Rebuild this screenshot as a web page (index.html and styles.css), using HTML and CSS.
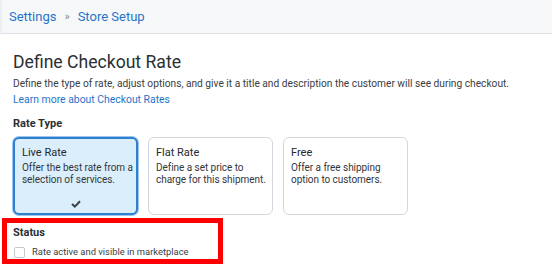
FILE: index.html
```html
<!DOCTYPE html>
<html lang="en">
<head>
  <meta charset="UTF-8" />
  <meta name="viewport" content="width=device-width, initial-scale=1.0" />
  <title>Define Checkout Rate</title>
  <link rel="stylesheet" href="styles.css">
</head>
<body>
  <div class="topbar">
    <a href="#">Settings</a>
    <span class="sep">&raquo;</span>
    <a href="#">Store Setup</a>
  </div>

  <div class="page">
    <h1>Define Checkout Rate</h1>
    <p class="intro">Define the type of rate, adjust options, and give it a title and description the customer will see during checkout.</p>
    <a class="learn" href="#">Learn more about Checkout Rates</a>

    <div class="label">Rate Type</div>
    <div class="rate-options">
      <div class="rate-card selected">
        <div class="rate-title">Live Rate</div>
        <div class="rate-desc">Offer the best rate from a selection of services.</div>
        <svg class="check" width="10" height="8" viewBox="0 0 10 8">
          <polyline points="1,4 3.8,6.6 9,1.2" fill="none" stroke="#3d4045" stroke-width="2" />
        </svg>
      </div>
      <div class="rate-card">
        <div class="rate-title">Flat Rate</div>
        <div class="rate-desc">Define a set price to charge for this shipment.</div>
      </div>
      <div class="rate-card">
        <div class="rate-title">Free</div>
        <div class="rate-desc">Offer a free shipping option to customers.</div>
      </div>
    </div>

    <div class="status">
      <div class="label">Status</div>
      <label class="check-row">
        <span class="box"></span>
        Rate active and visible in marketplace
      </label>
    </div>
  </div>
</body>
</html>
```

FILE: styles.css
```css
body {
  font-family: Roboto, "Liberation Sans", sans-serif;
  margin: 0;
  background: white;
  color: #2b2e33;
}

.topbar {
  background-color: #f7f8fa;
  border-bottom: 1px solid #dde1e6;
  border-left: 2px solid #eceef1;
  height: 33px;
  display: flex;
  align-items: center;
  padding-left: 7px;
  font-size: 13px;
}

.topbar a {
  color: #1f74c9;
  text-decoration: none;
}

.topbar .sep {
  color: #8a8f96;
  font-size: 11px;
  margin: 0 8px;
}

.page {
  padding: 0 13px;
}

h1 {
  font-size: 17.6px;
  font-weight: 400;
  line-height: 22px;
  margin: 17px 0 3px 0;
  color: #2b2f33;
}

.intro {
  font-size: 10.2px;
  line-height: 16px;
  margin: 0;
  color: #3a3d42;
  white-space: nowrap;
}

.learn {
  display: block;
  font-size: 10.4px;
  line-height: 16px;
  color: #1f74c9;
  text-decoration: none;
}

.label {
  font-size: 11px;
  font-weight: 700;
  line-height: 16px;
  margin-top: 8px;
  color: #2b2e33;
}

.rate-options {
  display: flex;
  gap: 10px;
  margin-top: 5px;
}

.rate-card {
  box-sizing: border-box;
  width: 125px;
  height: 78px;
  border: 1px solid #d3d8de;
  border-radius: 6px;
  padding: 7px 1px 7px 7px;
  display: flex;
  flex-direction: column;
  background: white;
}

.rate-card.selected {
  border: 2px solid #2f7fcf;
  background: #dbeefc;
  box-shadow: 0 0 0 1px #9cc7ee;
  padding: 6px 1px 5px 7px;
}

.rate-title {
  font-size: 11px;
  line-height: 16px;
  color: #25282c;
}

.rate-desc {
  font-size: 10px;
  line-height: 12px;
  letter-spacing: -0.05px;
  margin-top: 1px;
  color: #33363a;
}

.check {
  margin-top: auto;
  align-self: center;
  margin-right: 6px;
}

.status {
  box-sizing: border-box;
  width: 221px;
  margin: 3px 0 0 -11px;
  border: 5px solid #ff0000;
  padding: 0 6px 1px 6px;
}

.status .label {
  margin-top: 2px;
}

.check-row {
  display: flex;
  align-items: center;
  gap: 7px;
  font-size: 9.4px;
  line-height: 12px;
  color: #3a3d42;
  margin-top: 5px;
  padding-left: 1px;
}

.check-row .box {
  box-sizing: border-box;
  width: 11px;
  height: 11px;
  border: 1px solid #c3c8ce;
  border-radius: 2px;
  background: white;
}
```
